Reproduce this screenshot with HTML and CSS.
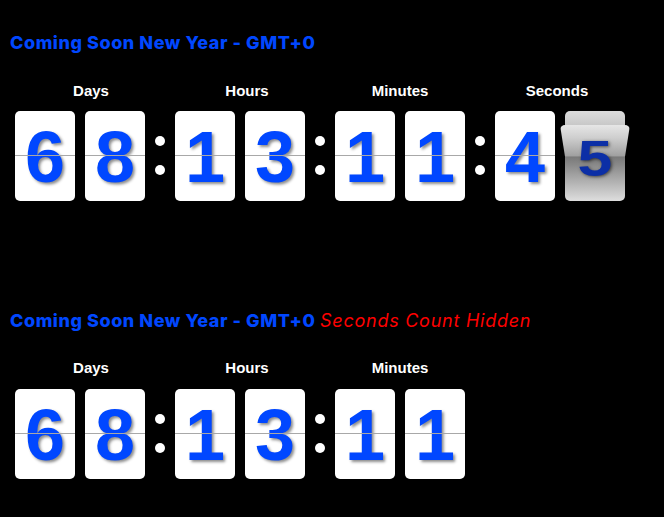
FILE: index.html
```html
<!DOCTYPE html>
<html lang="en">
<head>
    <meta charset="UTF-8">
    <title>Countdown</title>
    <link rel="stylesheet" href="styles.css">
</head>
<body>
<div class="countdown" id="clock1">
    <h2 class="title">Coming Soon New Year - GMT+0</h2>
    <div class="labels">
        <span>Days</span>
        <span>Hours</span>
        <span>Minutes</span>
        <span>Seconds</span>
    </div>
    <div class="cards">
        <div class="card">6</div>
        <div class="card">8</div>
        <div class="colon"></div>
        <div class="card">1</div>
        <div class="card">3</div>
        <div class="colon"></div>
        <div class="card">1</div>
        <div class="card">1</div>
        <div class="colon"></div>
        <div class="card">4</div>
        <div class="card flip"><div class="flap"></div><span class="num">5</span></div>
    </div>
</div>

<div class="countdown second" id="clock2">
    <h2 class="title">Coming Soon New Year - GMT+0 <em class="note">Seconds Count Hidden</em></h2>
    <div class="labels">
        <span>Days</span>
        <span>Hours</span>
        <span>Minutes</span>
    </div>
    <div class="cards">
        <div class="card">6</div>
        <div class="card">8</div>
        <div class="colon"></div>
        <div class="card">1</div>
        <div class="card">3</div>
        <div class="colon"></div>
        <div class="card">1</div>
        <div class="card">1</div>
    </div>
</div>
</body>
</html>
```

FILE: styles.css
```css
body {
    margin: 0;
    padding: 31px 10px 0;
    background-color: #000;
    font-family: "Liberation Sans", Arial, sans-serif;
}

.second {
    margin-top: 108px;
}

.title {
    margin: 0;
    height: 24px;
    line-height: 24px;
    font-family: Inter, "Open Sans", sans-serif;
    font-size: 18px;
    font-weight: 800;
    letter-spacing: 0.55px;
    color: #0047ff;
}

.note {
    font-weight: 400;
    color: #ff0000;
    letter-spacing: 0.75px;
}

.labels {
    display: grid;
    grid-template-columns: 156px 156px 150px 164px;
    margin-top: 26px;
    padding-left: 3px;
    height: 20px;
    line-height: 20px;
    color: #fff;
    font-size: 15px;
    font-weight: bold;
    text-align: center;
}

.second .labels {
    margin-top: 25px;
}

.cards {
    display: flex;
    margin-top: 10px;
    padding-left: 5px;
}

.second .cards {
    margin-top: 11px;
}

.card {
    position: relative;
    width: 60px;
    height: 90px;
    margin-right: 10px;
    border-radius: 5px;
    background-color: #fff;
    color: #0047ff;
    font-size: 72px;
    font-weight: bold;
    line-height: 92px;
    text-align: center;
    text-shadow: 2px 2px 3px rgba(0, 0, 0, 0.45);
}

.card::after {
    content: "";
    position: absolute;
    left: 0;
    right: 0;
    top: 44px;
    height: 1px;
    background-color: #a8a8a8;
}

.colon {
    position: relative;
    width: 10px;
    margin-right: 10px;
}

.colon::before,
.colon::after {
    content: "";
    position: absolute;
    left: 0;
    width: 10px;
    height: 10px;
    border-radius: 50%;
    background-color: #fff;
}

.colon::before {
    top: 25px;
}

.colon::after {
    top: 54px;
}

/* card in the middle of turning over */
.flip {
    background: linear-gradient(#dcdcdc 0%, #a9a9a9 40%, #777 50%, #8a8a8a 60%, #c9c9c9 90%, #dedede 100%);
    color: #0c2fa6;
    text-shadow: 1px 1px 3px rgba(0, 0, 0, 0.6);
}

.flip::after {
    background-color: #8a8a8a;
    top: 45px;
}

.flip .num {
    position: relative;
    z-index: 1;
    display: inline-block;
    font-size: 50px;
    line-height: 92px;
    transform: translateY(-6px) scaleX(1.25);
    filter: blur(0.4px);
}

.flap {
    position: absolute;
    top: 14px;
    left: -5px;
    width: 70px;
    height: 31px;
    border-radius: 5px 5px 0 0;
    background: linear-gradient(#e6e6e6, #cfcfcf 40%, #a0a0a0);
    clip-path: polygon(0 0, 100% 0, 93% 100%, 7% 100%);
}
```
